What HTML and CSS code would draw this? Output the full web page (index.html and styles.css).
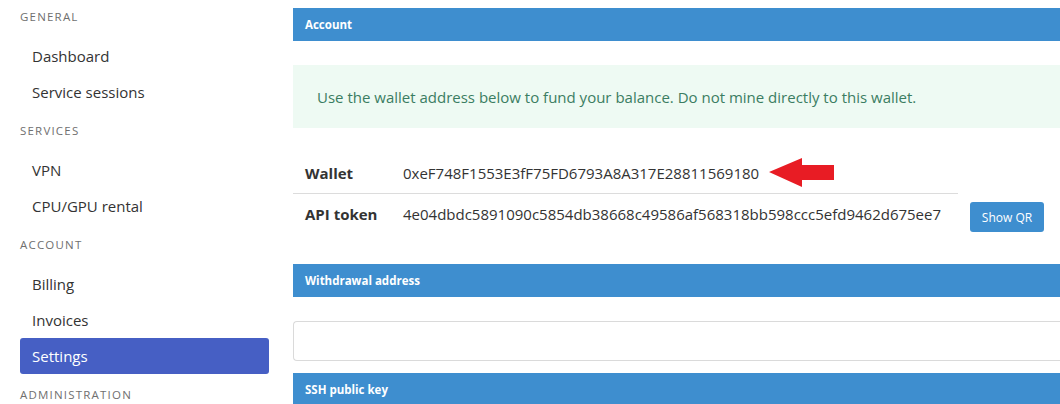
FILE: index.html
```html
<!DOCTYPE html>
<html>
<head>
<meta charset="utf-8">
<link rel="stylesheet" href="styles.css">
</head>
<body>
<div class="layout">
  <nav class="sidebar">
    <div class="nav-label">General</div>
    <a class="nav-item">Dashboard</a>
    <a class="nav-item">Service sessions</a>
    <div class="nav-label">Services</div>
    <a class="nav-item">VPN</a>
    <a class="nav-item">CPU/GPU rental</a>
    <div class="nav-label">Account</div>
    <a class="nav-item">Billing</a>
    <a class="nav-item">Invoices</a>
    <a class="nav-item active">Settings</a>
    <div class="nav-label">Administration</div>
  </nav>
  <main class="main">
    <div class="panel-head">Account</div>
    <div class="alert">Use the wallet address below to fund your balance. Do not mine directly to this wallet.</div>
    <div class="account-row">
      <div class="kv">
        <div class="kv-row kv-first">
          <div class="kv-key">Wallet</div>
          <div class="kv-val">0xeF748F1553E3fF75FD6793A8A317E28811569180<svg class="arrow" width="66" height="30" viewBox="0 0 66 30"><polygon points="0,14 33,0 33,7 65,7 65,22 33,22 33,29" fill="#e81c24"/></svg></div>
        </div>
        <div class="kv-row">
          <div class="kv-key">API token</div>
          <div class="kv-val">4e04dbdc5891090c5854db38668c49586af568318bb598ccc5efd9462d675ee7</div>
        </div>
      </div>
      <button class="btn">Show QR</button>
    </div>
    <div class="panel-head spaced">Withdrawal address</div>
    <div class="input"></div>
    <div class="panel-head ssh">SSH public key</div>
  </main>
</div>
</body>
</html>
```
FILE: styles.css
```css
html, body {
  margin: 0;
  padding: 0;
  background: #fff;
  font-family: "Open Sans", "Noto Sans", sans-serif;
  color: #333;
  overflow: hidden;
}
.layout {
  display: flex;
  width: 1060px;
  height: 404px;
  overflow: hidden;
}
.sidebar {
  width: 273px;
  flex: none;
  padding: 2px 0 0 20px;
  display: flex;
  flex-direction: column;
}
.nav-label {
  height: 30px;
  line-height: 30px;
  margin: 6px 0;
  font-size: 11.5px;
  letter-spacing: 1.2px;
  text-transform: uppercase;
  color: #6f6f6f;
  flex: none;
}
.nav-label:first-child { margin-top: 0; }
.nav-item {
  height: 36px;
  line-height: 36px;
  width: 249px;
  padding-left: 12px;
  box-sizing: border-box;
  font-size: 15px;
  color: #333;
  border-radius: 3px;
  flex: none;
}
.nav-item.active {
  background: #465fc4;
  color: #fff;
}
.main {
  flex: 1;
  min-width: 0;
  padding-top: 8px;
  display: flex;
  flex-direction: column;
}
.panel-head {
  height: 33px;
  line-height: 33px;
  background: #3e8ecf;
  color: #fff;
  font-weight: bold;
  font-size: 11.5px;
  padding-left: 12px;
  flex: none;
}
.alert {
  margin-top: 24px;
  height: 63px;
  line-height: 65px;
  background: #eefaf3;
  color: #3b7d62;
  padding-left: 24px;
  font-size: 15px;
  white-space: nowrap;
}
.account-row {
  margin-top: 25px;
  display: flex;
  align-items: flex-end;
  gap: 12px;
}
.kv {
  width: 665px;
  flex: none;
}
.kv-row {
  display: flex;
  align-items: center;
  height: 40px;
  font-size: 15px;
}
.kv-first {
  border-bottom: 1px solid #dcdcdc;
}
.kv-key {
  width: 98px;
  padding-left: 12px;
  font-weight: bold;
  color: #333;
}
.kv-val {
  display: flex;
  align-items: center;
  white-space: nowrap;
  color: #333;
}
.arrow {
  margin-left: 10px;
  flex: none;
}
.btn {
  width: 74px;
  height: 30px;
  margin-bottom: 2px;
  background: #3e8ecf;
  color: #fff;
  border: none;
  border-radius: 3px;
  font-family: inherit;
  font-size: 12px;
  padding: 0;
}
.spaced { margin-top: 30px; }
.input {
  margin-top: 24px;
  height: 38px;
  border: 1px solid #dadada;
  border-right: none;
  border-radius: 4px 0 0 4px;
  flex: none;
}
.ssh { margin-top: 12px; }
```
